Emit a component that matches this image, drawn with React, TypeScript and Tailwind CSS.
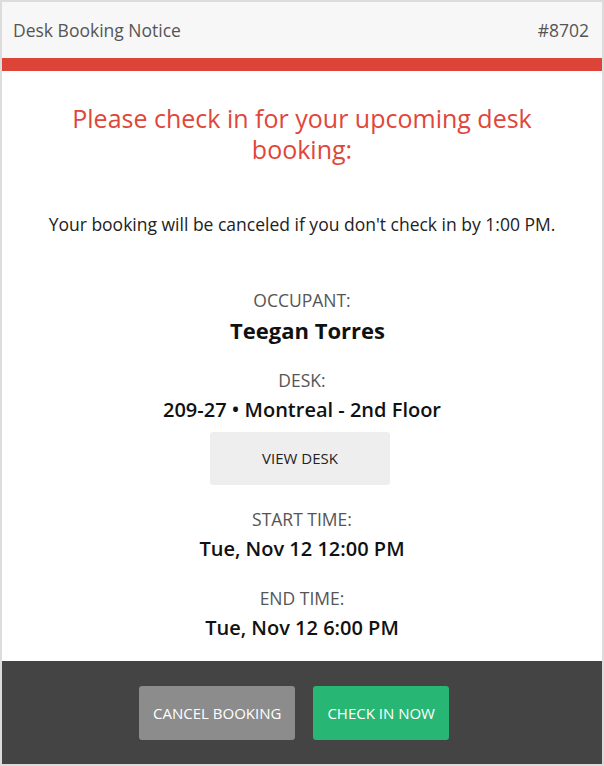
import React from 'react'

const Detail = ({ label, value, bold }: { label: string; value: string; bold?: boolean }) => (
  <div className="flex flex-col items-center">
    <div className="text-[17.5px] leading-[24px] text-[#555]">{label}</div>
    <div
      className={`leading-[36px] text-[#111] ${bold ? 'text-[22px] font-bold pl-[11px]' : 'text-[20px] font-semibold'}`}
    >
      {value}
    </div>
  </div>
)

const App = () => {
  return (
    <div
      className="h-[766px] w-[604px] border-2 border-[#dcdcdc] bg-white flex flex-col"
      style={{ fontFamily: '"Open Sans", "Liberation Sans", sans-serif' }}
    >
      {/* Header */}
      <div className="h-[56px] bg-[#f7f7f7] flex items-center justify-between pl-[11px] pr-[13px] text-[17.5px] text-[#555]">
        <span>Desk Booking Notice</span>
        <span>#8702</span>
      </div>
      <div className="h-[13px] bg-[#dc4437]" />

      {/* Body */}
      <div className="flex-1 flex flex-col items-center text-center px-[40px]">
        <h1 className="mt-[32px] text-[25px] leading-[31px] text-[#e0463a]">
          Please check in for your upcoming desk booking:
        </h1>
        <p className="mt-[47px] text-[17.5px] leading-[24px] text-[#222] whitespace-nowrap">
          Your booking will be canceled if you don't check in by 1:00 PM.
        </p>

        <div className="mt-[52px]">
          <Detail label="OCCUPANT:" value="Teegan Torres" bold />
        </div>
        <div className="mt-[20px]">
          <Detail label="DESK:" value="209-27 • Montreal - 2nd Floor" />
        </div>
        <button className="mt-[4px] mr-[4px] h-[53px] w-[180px] rounded-[3px] bg-[#eeeeee] text-[15px] text-[#222]">
          VIEW DESK
        </button>
        <div className="mt-[22px]">
          <Detail label="START TIME:" value="Tue, Nov 12 12:00 PM" />
        </div>
        <div className="mt-[19px]">
          <Detail label="END TIME:" value="Tue, Nov 12 6:00 PM" />
        </div>
      </div>

      {/* Footer */}
      <div className="h-[103px] bg-[#444444] flex justify-center items-start pt-[25px] pl-[2px]">
        <button className="mr-[18px] h-[54px] px-[14px] rounded-[3px] bg-[#8c8c8c] text-[15px] text-white">
          CANCEL BOOKING
        </button>
        <button className="mr-[18px] h-[54px] px-[14px] rounded-[3px] bg-[#27b673] text-[15px] text-white">
          CHECK IN NOW
        </button>
      </div>
    </div>
  )
}

export default App
